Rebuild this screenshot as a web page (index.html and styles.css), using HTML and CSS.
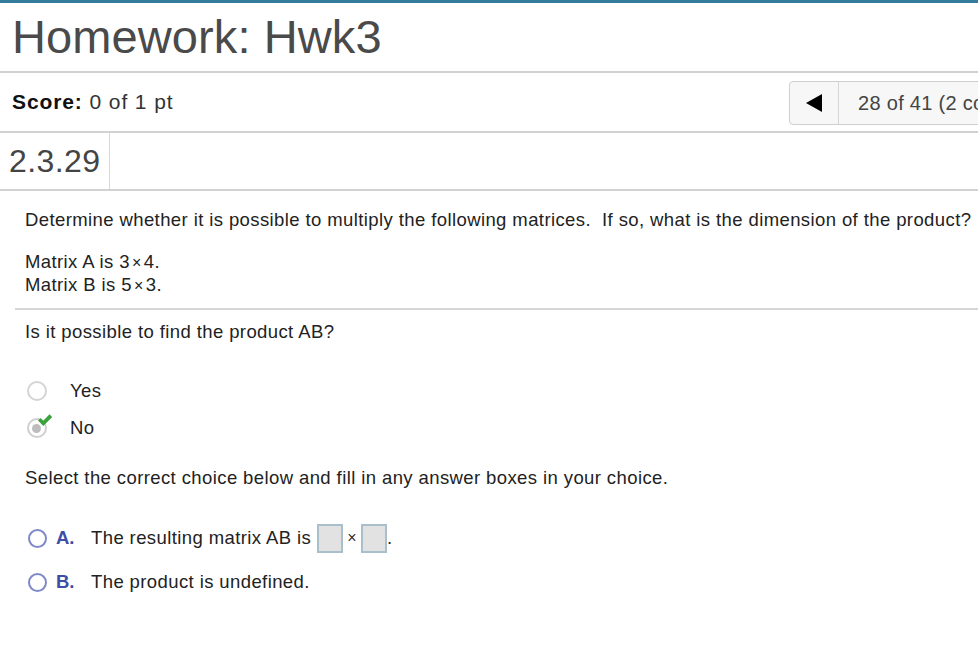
FILE: index.html
```html
<!DOCTYPE html>
<html>
<head>
<meta charset="utf-8">
<link rel="stylesheet" href="styles.css">
</head>
<body>
<div class="page">
  <div class="topbar"></div>
  <div class="title-row"><h1 class="title">Homework: Hwk3</h1></div>
  <div class="score-row">
    <div class="score"><b>Score:</b> 0 of 1 pt</div>
    <div class="nav">
      <div class="nav-prev"><svg width="16" height="18" viewBox="0 0 16 18"><polygon points="16,0 16,18 0,9" fill="#000"/></svg></div>
      <div class="nav-text">28 of 41 (2 complete)</div>
    </div>
  </div>
  <div class="qnum-row"><div class="qnum">2.3.29</div></div>
  <div class="content">
    <p class="intro">Determine whether it is possible to multiply the following matrices.&nbsp; If so, what is the dimension of the product?</p>
    <p class="matrices">Matrix A is 3<span class="x">×</span>4.<br>Matrix B is 5<span class="x">×</span>3.</p>
    <div class="divider"></div>
    <p class="q">Is it possible to find the product AB?</p>
    <div class="yn">
      <div class="yn-opt"><span class="radio-gray"></span><span>Yes</span></div>
      <div class="yn-opt"><span class="radio-gray checked"><svg class="check" width="16" height="13" viewBox="0 0 15 13"><path d="M0.5 6.5 L3 4 L5.8 6.8 L12 0.3 L14.7 3 L5.8 12 Z" fill="#39a33a"/></svg></span><span>No</span></div>
    </div>
    <p class="select">Select the correct choice below and fill in any answer boxes in your choice.</p>
    <div class="choices">
      <div class="choice"><span class="radio-blue"></span><span class="letter">A.</span><span class="ctext">The resulting matrix AB is <span class="box"></span><span class="times">×</span><span class="box"></span>.</span></div>
      <div class="choice"><span class="radio-blue"></span><span class="letter">B.</span><span class="ctext">The product is undefined.</span></div>
    </div>
  </div>
</div>
</body>
</html>
```
FILE: styles.css
```css
html, body { margin: 0; padding: 0; background: #fff; }
body { font-family: "Liberation Sans", Arial, sans-serif; color: #222; overflow: hidden; width: 978px; height: 654px; }
.page { width: 978px; }
.topbar { height: 3px; background: #357b9c; }
.title-row { height: 68px; border-bottom: 2px solid #d2d2d2; display: flex; align-items: center; }
.title { margin: 0 0 0 12px; font-weight: normal; font-size: 47px; color: #4a4a4a; line-height: 1; position: relative; top: -1px; letter-spacing: 0.1px; }
.score-row { height: 58px; border-bottom: 2px solid #d2d2d2; display: flex; align-items: center; justify-content: space-between; overflow: hidden; }
.score { margin-left: 12px; font-size: 21px; color: #333; letter-spacing: 0.9px; }
.score b { color: #111; }
.nav { display: flex; height: 44px; margin-right: -71px; border: 1px solid #cfcfcf; border-radius: 4px; background: #f7f7f7; box-sizing: border-box; margin-top: 2px; }
.nav-prev { width: 48px; display: flex; align-items: center; justify-content: center; border-right: 1px solid #d6d6d6; }
.nav-text { padding-left: 19px; font-size: 20px; color: #444; display: flex; align-items: center; white-space: nowrap; width: 190px; letter-spacing: 0.3px; }
.qnum-row { height: 56px; border-bottom: 2px solid #d2d2d2; display: flex; }
.qnum { padding: 0 0 0 9px; font-size: 32px; color: #444; border-right: 1px solid #d8d8d8; display: flex; align-items: center; width: 100px; letter-spacing: 0.4px; }
.content { padding-left: 25px; font-size: 18.5px; color: #222; letter-spacing: 0.4px; }
.content p { margin: 0; }
.intro { padding-top: 18px; line-height: 22px; white-space: nowrap; }
.matrices { margin-top: 20px !important; line-height: 22px; }
.x { font-size: 16px; padding: 0 2px; }
.divider { height: 2px; background: #d6d6d6; margin: 11px 0 0 -10px; }
.q { margin-top: 11px !important; line-height: 22px; }
.yn { margin-top: 37px; display: flex; flex-direction: column; gap: 15px; }
.yn-opt { display: flex; align-items: center; height: 22px; }
.yn-opt span:last-child { margin-left: 23px; }
.radio-gray { width: 16px; height: 16px; border: 2px solid #d4d4d4; border-radius: 50%; margin-left: 2px; position: relative; box-sizing: content-box; }
.radio-gray.checked { border-color: #cfcfcf; }
.radio-gray.checked::after { content: ""; position: absolute; left: 3px; top: 4px; width: 9px; height: 9px; border-radius: 50%; background: #bdbdbd; }
.check { position: absolute; left: 8px; top: -6px; z-index: 1; }
.select { margin-top: 28px !important; line-height: 22px; }
.choices { margin-top: 35px; display: flex; flex-direction: column; gap: 16px; }
.choice { display: flex; align-items: center; height: 28px; }
.radio-blue { width: 15px; height: 15px; border: 2px solid #7f89c8; border-radius: 50%; margin-left: 3px; }
.letter { font-weight: bold; color: #3c4ea6; margin-left: 9px; width: 35px; letter-spacing: 0; }
.ctext { display: flex; align-items: center; }
.box { display: inline-block; width: 22px; height: 25px; background: #e2e2e2; border: 2px solid #a9bfcc; margin-left: 6px; }
.times { font-size: 16px; color: #333; margin: 0 0 0 4px; }
.times + .box { margin-left: 4px; }
```
